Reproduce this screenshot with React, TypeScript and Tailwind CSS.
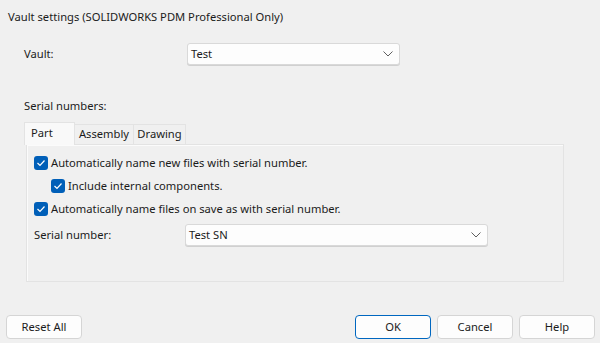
import React from 'react';

const Chevron = () => (
    <svg width="10" height="6" viewBox="0 0 10 6" className="shrink-0">
        <path d="M0.5 0.5 L5 5 L9.5 0.5" fill="none" stroke="#5f5f5f" strokeWidth="1" />
    </svg>
);

const Select = ({ value, className }: { value: string; className: string }) => (
    <div className={`flex items-center justify-between h-[22px] bg-[#fdfdfd] border border-[#d9d9d9] rounded-[3px] pl-[3px] pr-[6px] shadow-[0_1px_0_#d0d0d0] ${className}`}>
        <span>{value}</span>
        <Chevron />
    </div>
);

const Check = ({ label, className = '' }: { label: string; className?: string }) => (
    <div className={`flex items-center h-[16px] ${className}`}>
        <div className="w-[14px] h-[14px] rounded-[3px] bg-[#005fb8] flex items-center justify-center mr-[3px]">
            <svg width="10" height="8" viewBox="0 0 10 8">
                <path d="M1.5 4 L4 6.5 L8.5 1.5" fill="none" stroke="#ffffff" strokeWidth="1.2" />
            </svg>
        </div>
        <span>{label}</span>
    </div>
);

const Button = ({ label, primary = false }: { label: string; primary?: boolean }) => (
    <div className={`w-[76px] h-[24px] flex items-center justify-center rounded-[4px] bg-[#fdfdfd] border ${primary ? 'border-[#0067c0]' : 'border-[#d5d5d5]'}`}>
        {label}
    </div>
);

export default function App() {
    return (
        <div className="w-[600px] h-[343px] bg-[#f0f0f0] text-[11.2px] leading-[16px] text-[#1b1b1b] flex flex-col font-['Noto_Sans',sans-serif]">
            <div className="mt-[9px] ml-[8px]">Vault settings (SOLIDWORKS PDM Professional Only)</div>

            <div className="mt-[18px] ml-[24px] flex items-center">
                <span className="w-[163px]">Vault:</span>
                <Select value="Test" className="w-[213px]" />
            </div>

            <div className="mt-[33px] ml-[24px]">Serial numbers:</div>

            <div className="mt-[8px] ml-[24px] flex items-end">
                <div className="w-[51px] h-[23px] bg-[#f9f9f9] border border-b-0 border-[#e3e3e3] pl-[6px] pt-[2px] -mb-px relative z-10">Part</div>
                <div className="w-[59px] h-[20px] bg-[#f0f0f0] border border-b-0 border-l-0 border-[#e3e3e3] text-center pt-[1px]">Assembly</div>
                <div className="w-[52px] h-[20px] bg-[#f0f0f0] border border-b-0 border-l-0 border-[#e3e3e3] text-center pt-[1px]">Drawing</div>
            </div>

            <div className="ml-[26px] w-[538px] h-[138px] border border-[#e3e3e3] shadow-[inset_1px_1px_0_#fbfbfb] pl-[7px] pt-[10px] flex flex-col">
                <Check label="Automatically name new files with serial number." />
                <Check label="Include internal components." className="mt-[7px] ml-[17px]" />
                <Check label="Automatically name files on save as with serial number." className="mt-[7px]" />
                <div className="mt-[7px] flex items-center">
                    <span className="w-[151px]">Serial number:</span>
                    <Select value="Test SN" className="w-[303px]" />
                </div>
            </div>

            <div className="mt-[33px] mx-[5px] flex items-center">
                <div className="ml-[1px]">
                    <Button label="Reset All" />
                </div>
                <div className="ml-auto flex gap-[6px]">
                    <Button label="OK" primary />
                    <Button label="Cancel" />
                    <Button label="Help" />
                </div>
            </div>
        </div>
    );
}
